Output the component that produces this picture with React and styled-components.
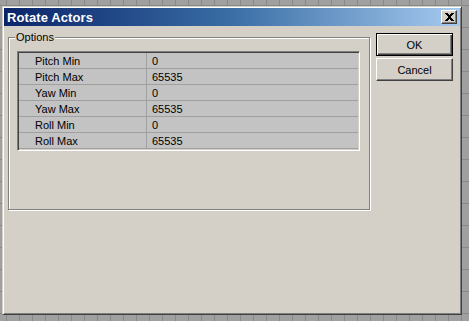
import React from 'react'
import styled, { createGlobalStyle } from 'styled-components'

const rows = [
  ['Pitch Min', '0'],
  ['Pitch Max', '65535'],
  ['Yaw Min', '0'],
  ['Yaw Max', '65535'],
  ['Roll Min', '0'],
  ['Roll Max', '65535'],
]

function App() {
  return (
    <>
      <GlobalStyle />
      <Desktop>
        <Window>
          <TitleBar>
            <Title>Rotate Actors</Title>
            <CloseButton aria-label="Close">
              <svg width="9" height="8" viewBox="0 0 9 8" shapeRendering="crispEdges">
                <path
                  fill="#000"
                  d="M0 0h3v1h-3zM6 0h3v1h-3zM1 1h3v1h-3zM5 1h3v1h-3zM2 2h5v1h-5zM3 3h3v2h-3zM2 5h5v1h-5zM1 6h3v1h-3zM5 6h3v1h-3zM0 7h3v1h-3zM6 7h3v1h-3z"
                />
              </svg>
            </CloseButton>
          </TitleBar>
          <Body>
            <GroupBox>
              <Legend>Options</Legend>
              <List>
                {rows.map(([name, value]) => (
                  <Row key={name}>
                    <NameCell>{name}</NameCell>
                    <ValueCell>{value}</ValueCell>
                  </Row>
                ))}
              </List>
            </GroupBox>
            <Buttons>
              <Button $default>OK</Button>
              <Button>Cancel</Button>
            </Buttons>
          </Body>
        </Window>
      </Desktop>
    </>
  )
}

export default App

const GlobalStyle = createGlobalStyle`
  html, body {
    margin: 0;
    padding: 0;
  }
  body {
    width: 469px;
    height: 321px;
    overflow: hidden;
    background-color: #a0a0a0;
    background-image:
      linear-gradient(90deg, #888 1px, transparent 1px),
      linear-gradient(#888 1px, transparent 1px);
    background-size: 13px 22px;
    background-position: 6px 5px;
    font-family: "Liberation Sans", Arial, sans-serif;
    font-size: 11px;
    color: #000;
  }
`
const Desktop = styled.div`
  padding: 6px 0 0 2px;
`
const Window = styled.div`
  box-sizing: border-box;
  width: 460px;
  height: 309px;
  padding: 1px;
  background: #d4d0c8;
  border: 1px solid;
  border-color: #d4d0c8 #404040 #404040 #d4d0c8;
  box-shadow: inset 1px 1px #fff, inset -1px -1px #808080;
`
const TitleBar = styled.div`
  height: 18px;
  display: flex;
  align-items: center;
  justify-content: space-between;
  padding: 0 3px 0 3px;
  background: linear-gradient(90deg, #0a246a 0%, #3a6ea5 50%, #a6caf0 100%);
`
const Title = styled.span`
  color: #fff;
  font-weight: bold;
  font-size: 13px;
  letter-spacing: 0.1px;
`
const CloseButton = styled.button`
  box-sizing: border-box;
  width: 16px;
  height: 14px;
  padding: 0;
  display: flex;
  align-items: center;
  justify-content: center;
  background: #d4d0c8;
  border: 1px solid;
  border-color: #fff #404040 #404040 #fff;
  box-shadow: inset -1px -1px #808080;
`
const Body = styled.div`
  display: flex;
  align-items: flex-start;
  gap: 6px;
  padding: 5px 0 0 4px;
`
const GroupBox = styled.fieldset`
  box-sizing: border-box;
  width: 362px;
  height: 179px;
  margin: 0;
  padding: 0 8px;
  border: 1px solid #808080;
  box-shadow: inset 1px 1px #fff, 1px 1px #fff;
`
const Legend = styled.legend`
  margin-left: -2px;
  padding: 0 1px;
  line-height: 12px;
  font-size: 11px;
  background: #d4d0c8;
`
const List = styled.div`
  box-sizing: border-box;
  width: 343px;
  margin-top: 8px;
  padding: 1px;
  border: 1px solid;
  border-color: #808080 #fff #fff #808080;
  box-shadow: inset 1px 1px #404040, inset -1px -1px #d4d0c8;
  background: #c3c3c3;
`
const Row = styled.div`
  box-sizing: border-box;
  display: grid;
  grid-template-columns: 128px 1fr;
  height: 16px;
  padding-top: 1px;
  line-height: 15px;
  border-bottom: 1px solid #a0a0a0;
`
const NameCell = styled.div`
  box-sizing: border-box;
  margin-top: -1px;
  padding: 1px 0 0 16px;
  border-right: 1px solid #a0a0a0;
`
const ValueCell = styled.div`
  padding-left: 5px;
`
const Buttons = styled.div`
  display: flex;
  flex-direction: column;
  gap: 2px;
  margin-top: 2px;
`
const Button = styled.button`
  box-sizing: border-box;
  width: 77px;
  height: 23px;
  padding: 0;
  font-family: "Liberation Sans", Arial, sans-serif;
  font-size: 11px;
  color: #000;
  background: #d4d0c8;
  border: 1px solid;
  border-color: ${p => (p.$default ? '#000' : '#fff #404040 #404040 #fff')};
  box-shadow: ${p =>
    p.$default
      ? 'inset 1px 1px #fff, inset -1px -1px #404040, inset -2px -2px #808080'
      : 'inset -1px -1px #808080'};
`
